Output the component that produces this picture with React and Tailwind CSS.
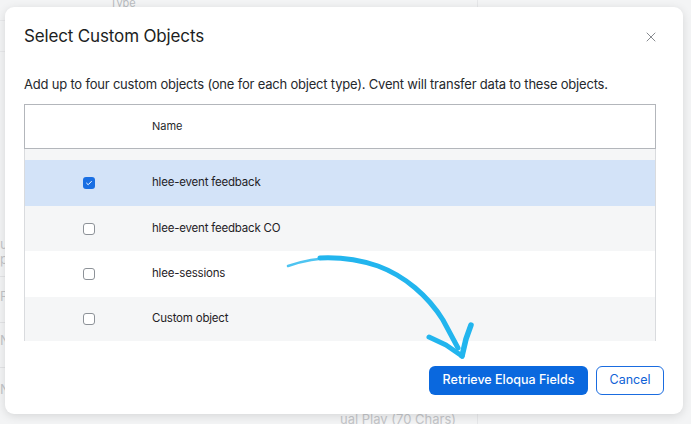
import { X } from "lucide-react";

const rows = [
  { name: "hlee-event feedback", checked: true, bg: "bg-[#d3e3f8]" },
  { name: "hlee-event feedback CO", checked: false, bg: "bg-[#f5f6f7]" },
  { name: "hlee-sessions", checked: false, bg: "bg-white" },
  { name: "Custom object", checked: false, bg: "bg-[#f5f6f7]" },
];

const heights = ["h-[46px]", "h-[45px]", "h-[46px]", "h-[44px]"];

function Checkbox({ checked }) {
  if (checked) {
    return (
      <span className="flex h-[12px] w-[12px] items-center justify-center rounded-[3px] bg-[#1a6fe3]">
        <svg width="8" height="8" viewBox="0 0 8 8" fill="none">
          <path d="M1.6 4.2 3.2 5.7 6.4 2.4" stroke="white" strokeWidth="1" strokeLinecap="round" strokeLinejoin="round" />
        </svg>
      </span>
    );
  }
  return <span className="block h-[12px] w-[12px] rounded-[3px] border border-[#8d9298] bg-white" />;
}

// hand drawn annotation arrow over the dialog
function Arrow() {
  return (
    <svg className="pointer-events-none absolute left-0 top-0" width="691" height="424" viewBox="0 0 691 424" fill="none">
      <path d="M288 266 C 305 260, 320 258, 335 258" stroke="#22b5ee" strokeWidth="2.5" strokeLinecap="round" opacity="0.8" />
      <path
        d="M320 258 C 340 257, 360 260, 378 266 C 405 276, 428 296, 443 320 L 458 348"
        stroke="#22b5ee"
        strokeWidth="5"
        strokeLinecap="round"
      />
      <path d="M429 337 L 446 345 L 462 356" stroke="#22b5ee" strokeWidth="5" strokeLinecap="round" strokeLinejoin="round" />
      <path d="M462 356 L 466 339 L 471 325" stroke="#22b5ee" strokeWidth="5.5" strokeLinecap="round" strokeLinejoin="round" />
    </svg>
  );
}

export default function App() {
  return (
    <div className="relative h-[424px] w-[691px] overflow-hidden bg-[#f3f4f5] font-['Inter',sans-serif]">
      {/* page behind the dialog */}
      <div className="flex h-full">
        <div className="flex w-[478px] flex-col border-r border-[#e6e7e9]">
          <div className="h-[21px] border-b border-[#e8e9eb] pl-[110px] text-[11px] leading-[6px] text-[#b9bcc0]">Type</div>
          <div className="h-[31px] border-b border-[#e8e9eb]" />
          <div className="h-[179px]" />
          <div className="flex h-[46px] flex-col border-b border-[#e3e4e6] pt-[6px] text-[13px] leading-[15px] text-[#c3c5c8]">
            <span>ue</span>
            <span>p</span>
          </div>
          <div className="h-[46px] border-b border-[#e3e4e6] pt-[10px] text-[13px] text-[#c3c5c8]">F</div>
          <div className="h-[45px] border-b border-[#e3e4e6] pt-[8px] text-[13px] text-[#c3c5c8]">N</div>
          <div className="pt-[12px] text-[13px] text-[#c3c5c8]">N</div>
          <div className="mt-auto pl-[340px] text-[13px] leading-[10px] whitespace-nowrap text-[#c3c5c8]">ual Play (70 Chars)</div>
        </div>
        <div className="flex-1" />
      </div>

      {/* dialog */}
      <div className="absolute left-[5px] top-[7px] flex h-[407px] w-[678px] flex-col rounded-[9px] bg-white px-[19px] shadow-[0_2px_10px_rgba(0,0,0,0.12)]">
        <div className="flex h-[58px] items-center justify-between pt-[1px]">
          <h2 className="text-[17px] font-normal tracking-[-0.15px] text-[#1c1e22]">Select Custom Objects</h2>
          <button className="mr-[5px] text-[#5b5f65]">
            <X size={16} strokeWidth={1.1} />
          </button>
        </div>
        <p className="mt-[11px] text-[13px] leading-[16px] tracking-[-0.2px] text-[#25282c]">
          Add up to four custom objects (one for each object type). Cvent will transfer data to these objects.
        </p>
        <div className="mt-[12px] flex h-[237px] w-[632px] flex-col overflow-hidden">
          <div className="grid h-[45px] grid-cols-[127px_1fr] items-center border border-[#b3b6bb] bg-white">
            <span />
            <span className="text-[11px] text-[#25282c]">Name</span>
          </div>
          <div className="h-[11px] border-x border-[#d9dbde] bg-[#f5f6f7]" />
          {rows.map((row, i) => (
            <div
              key={row.name}
              className={`grid ${heights[i]} grid-cols-[127px_1fr] items-center border-x border-[#d9dbde] ${row.bg}`}
            >
              <span className="flex justify-center pl-[1px]">
                <Checkbox checked={row.checked} />
              </span>
              <span className="text-[11.5px] tracking-[-0.2px] text-[#1f2226]">{row.name}</span>
            </div>
          ))}
        </div>
        <div className="mt-[25px] flex justify-end gap-[8px]">
          <button className="h-[29px] w-[159px] rounded-[6px] bg-[#0a68de] text-[12.5px] font-medium text-white">
            Retrieve Eloqua Fields
          </button>
          <button className="h-[29px] w-[68px] rounded-[6px] border border-[#1a6ce0] bg-white text-[12.5px] text-[#0f62d6]">
            Cancel
          </button>
        </div>
      </div>

      <Arrow />
    </div>
  );
}
